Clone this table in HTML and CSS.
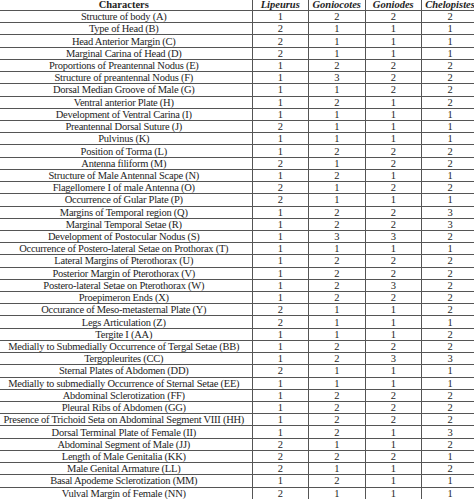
FILE: index.html
```html
<!DOCTYPE html>
<html>
<head>
<meta charset="utf-8">
<link rel="stylesheet" href="styles.css">
</head>
<body>
<div class="wrap">
<table class="traits">
<colgroup><col class="c-name"><col class="c-sp"><col class="c-sp"><col class="c-sp"><col class="c-sp"></colgroup>
<thead>
<tr><th class="h-name">Characters</th><th class="h-sp">Lipeurus</th><th class="h-sp">Goniocotes</th><th class="h-sp">Goniodes</th><th class="h-sp">Chelopistes</th></tr>
</thead>
<tbody>
<tr><td>Structure of body (A)</td><td>1</td><td>2</td><td>2</td><td>2</td></tr>
<tr><td>Type of Head (B)</td><td>2</td><td>1</td><td>1</td><td>1</td></tr>
<tr><td>Head Anterior Margin (C)</td><td>2</td><td>1</td><td>1</td><td>1</td></tr>
<tr><td>Marginal Carina of Head (D)</td><td>2</td><td>1</td><td>1</td><td>1</td></tr>
<tr><td>Proportions of Preantennal Nodus (E)</td><td>1</td><td>2</td><td>2</td><td>2</td></tr>
<tr><td>Structure of preantennal Nodus (F)</td><td>1</td><td>3</td><td>2</td><td>2</td></tr>
<tr><td>Dorsal Median Groove of Male (G)</td><td>1</td><td>1</td><td>2</td><td>2</td></tr>
<tr><td>Ventral anterior Plate (H)</td><td>1</td><td>2</td><td>1</td><td>2</td></tr>
<tr><td>Development of Ventral Carina (I)</td><td>1</td><td>1</td><td>1</td><td>1</td></tr>
<tr><td>Preantennal Dorsal Suture (J)</td><td>2</td><td>1</td><td>1</td><td>1</td></tr>
<tr><td>Pulvinus (K)</td><td>1</td><td>1</td><td>1</td><td>1</td></tr>
<tr><td>Position of Torma (L)</td><td>1</td><td>2</td><td>2</td><td>2</td></tr>
<tr><td>Antenna filiform (M)</td><td>2</td><td>1</td><td>2</td><td>2</td></tr>
<tr><td>Structure of Male Antennal Scape (N)</td><td>1</td><td>2</td><td>1</td><td>1</td></tr>
<tr><td>Flagellomere I of male Antenna (O)</td><td>2</td><td>1</td><td>2</td><td>2</td></tr>
<tr><td>Occurrence of Gular Plate (P)</td><td>2</td><td>1</td><td>1</td><td>1</td></tr>
<tr><td>Margins of Temporal region (Q)</td><td>1</td><td>2</td><td>2</td><td>3</td></tr>
<tr><td>Marginal Temporal Setae (R)</td><td>1</td><td>2</td><td>2</td><td>3</td></tr>
<tr><td>Development of Postocular Nodus (S)</td><td>1</td><td>3</td><td>3</td><td>2</td></tr>
<tr><td>Occurrence of Postero-lateral Setae on Prothorax (T)</td><td>1</td><td>1</td><td>1</td><td>1</td></tr>
<tr><td>Lateral Margins of Pterothorax (U)</td><td>1</td><td>2</td><td>2</td><td>2</td></tr>
<tr><td>Posterior Margin of Pterothorax (V)</td><td>1</td><td>2</td><td>2</td><td>2</td></tr>
<tr><td>Postero-lateral Setae on Pterothorax (W)</td><td>1</td><td>2</td><td>3</td><td>2</td></tr>
<tr><td>Proepimeron Ends (X)</td><td>1</td><td>2</td><td>2</td><td>2</td></tr>
<tr><td>Occurance of Meso-metasternal Plate (Y)</td><td>2</td><td>1</td><td>1</td><td>2</td></tr>
<tr><td>Legs Articulation (Z)</td><td>2</td><td>1</td><td>1</td><td>1</td></tr>
<tr><td>Tergite I (AA)</td><td>1</td><td>1</td><td>1</td><td>2</td></tr>
<tr><td>Medially to Submedially Occurrence of Tergal Setae (BB)</td><td>1</td><td>2</td><td>2</td><td>2</td></tr>
<tr><td>Tergopleurites (CC)</td><td>1</td><td>2</td><td>3</td><td>3</td></tr>
<tr><td>Sternal Plates of Abdomen (DD)</td><td>2</td><td>1</td><td>1</td><td>1</td></tr>
<tr><td>Medially to submedially Occurrence of Sternal Setae (EE)</td><td>1</td><td>1</td><td>1</td><td>1</td></tr>
<tr><td>Abdominal Sclerotization (FF)</td><td>1</td><td>2</td><td>2</td><td>2</td></tr>
<tr><td>Pleural Ribs of Abdomen (GG)</td><td>1</td><td>2</td><td>2</td><td>2</td></tr>
<tr><td>Presence of Trichoid Seta on Abdominal Segment VIII (HH)</td><td>1</td><td>2</td><td>2</td><td>2</td></tr>
<tr><td>Dorsal Terminal Plate of Female (II)</td><td>1</td><td>2</td><td>1</td><td>3</td></tr>
<tr><td>Abdominal Segment of Male (JJ)</td><td>2</td><td>1</td><td>1</td><td>2</td></tr>
<tr><td>Length of Male Genitalia (KK)</td><td>2</td><td>2</td><td>2</td><td>1</td></tr>
<tr><td>Male Genital Armature (LL)</td><td>2</td><td>1</td><td>1</td><td>2</td></tr>
<tr><td>Basal Apodeme Sclerotization (MM)</td><td>1</td><td>2</td><td>1</td><td>1</td></tr>
<tr><td>Vulval Margin of Female (NN)</td><td>2</td><td>1</td><td>1</td><td>1</td></tr>
</tbody>
</table>
</div>
</body>
</html>
```
FILE: styles.css
```css
html, body {
  margin: 0;
  padding: 0;
  background: #ffffff;
  overflow: hidden;
}

.wrap {
  margin: 0 0 0 -4px;
  width: 482px;
}

.traits {
  border-collapse: collapse;
  table-layout: fixed;
  width: 482px;
  font-family: "Liberation Serif", "Times New Roman", serif;
  font-size: 10.5px;
  letter-spacing: -0.25px;
  color: #1e1e1e;
}

.c-name { width: 256px; }
.c-sp { width: 56.5px; }

.traits tbody tr {
  height: 12.22px;
}

.traits thead tr {
  height: 10px;
}

.traits th,
.traits td {
  padding: 0;
  text-align: center;
  line-height: 11px;
  white-space: nowrap;
  overflow: hidden;
  border-top: 1px solid #555555;
}

.traits th + th,
.traits td + td {
  border-left: 1px solid #555555;
}

.traits thead th {
  border-top: none;
  border-bottom: 1px solid #555555;
  line-height: 10px;
  letter-spacing: 0;
}

.h-name {
  font-weight: bold;
}

.h-sp {
  font-weight: bold;
  font-style: italic;
}
```
